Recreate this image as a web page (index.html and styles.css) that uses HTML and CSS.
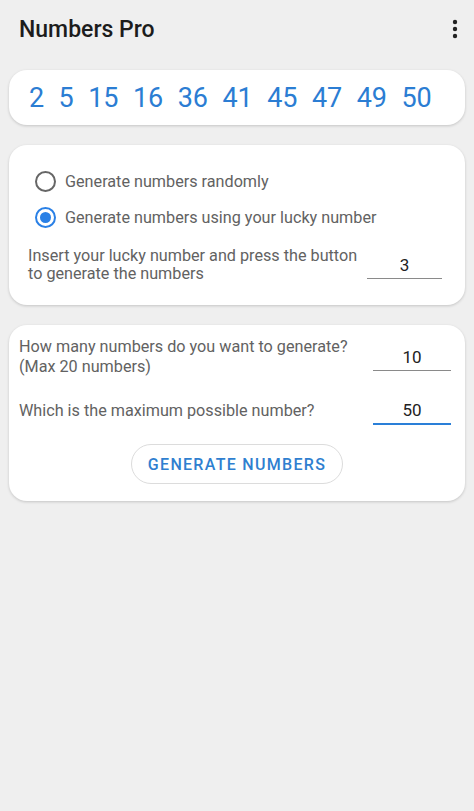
FILE: index.html
```html
<!DOCTYPE html>
<html lang="en">
<head>
  <meta charset="UTF-8" />
  <meta name="viewport" content="width=device-width, initial-scale=1.0" />
  <title>Numbers Pro</title>
  <link rel="stylesheet" href="styles.css">
</head>
<body>

  <header class="appbar">
    <div class="app-title">Numbers Pro</div>
    <div class="menu-btn">
      <svg width="6" height="20" viewBox="0 0 6 20">
        <circle cx="3" cy="3" r="2.2" fill="#222" />
        <circle cx="3" cy="10" r="2.2" fill="#222" />
        <circle cx="3" cy="17" r="2.2" fill="#222" />
      </svg>
    </div>
  </header>

  <main class="page">

    <!-- Result -->
    <section class="card result-card">
      <span>2</span><span>5</span><span>15</span><span>16</span><span>36</span>
      <span>41</span><span>45</span><span>47</span><span>49</span><span>50</span>
    </section>

    <!-- Mode -->
    <section class="card mode-card">
      <div class="radio-group">
        <label class="radio-row">
          <span class="radio"></span>
          Generate numbers randomly
        </label>
        <label class="radio-row">
          <span class="radio checked"></span>
          Generate numbers using your lucky number
        </label>
      </div>
      <div class="field-row lucky-row">
        <p>Insert your lucky number and press the button to generate the numbers</p>
        <input class="num-input lucky-input" type="text" value="3">
      </div>
    </section>

    <!-- Settings -->
    <section class="card settings-card">
      <div class="field-row">
        <p>How many numbers do you want to generate?<br>(Max 20 numbers)</p>
        <input class="num-input" type="text" value="10">
      </div>
      <div class="field-row max-row">
        <p>Which is the maximum possible number?</p>
        <input class="num-input focused" type="text" value="50">
      </div>
      <div class="btn-wrap">
        <button class="generate-btn">Generate numbers</button>
      </div>
    </section>

  </main>

</body>
</html>
```

FILE: styles.css
```css
/* General */
body {
  font-family: Roboto, "Noto Sans", Arial, sans-serif;
  margin: 0;
  padding: 0;
  background-color: #efefef;
  color: #626262;
}

p {
  margin: 0;
}

/* App bar */
.appbar {
  height: 58px;
  padding: 0 19px;
  display: flex;
  justify-content: space-between;
  align-items: center;
}

.app-title {
  font-size: 23px;
  font-weight: 500;
  color: #1c1c1c;
}

.menu-btn {
  display: flex;
  margin-right: -3px;
}

/* Cards */
.page {
  padding: 12px 9px;
  display: flex;
  flex-direction: column;
  gap: 20px;
}

.card {
  background-color: #fff;
  border-radius: 18px;
  box-shadow: 0 1px 3px rgba(0, 0, 0, 0.18);
}

.result-card {
  height: 55px;
  padding: 0 20px;
  display: flex;
  align-items: center;
  gap: 14.4px;
  font-size: 27px;
  color: #2b7dd3;
}

/* Radio options */
.mode-card {
  padding: 18px 23px 22px 19px;
}

.radio-group {
  margin-left: 7px;
}

.radio-row {
  height: 36px;
  display: flex;
  align-items: center;
  gap: 9px;
  font-size: 16.2px;
  color: #626262;
}

.radio {
  width: 17px;
  height: 17px;
  border: 2px solid #666;
  border-radius: 50%;
  box-sizing: content-box;
  display: flex;
  align-items: center;
  justify-content: center;
}

.radio.checked {
  border-color: #2a80e6;
}

.radio.checked::after {
  content: "";
  width: 11px;
  height: 11px;
  border-radius: 50%;
  background-color: #2a80e6;
}

/* Input rows */
.field-row {
  display: flex;
  align-items: center;
  justify-content: space-between;
  font-size: 16.2px;
  line-height: 20px;
}

.lucky-row {
  margin-top: 12px;
  line-height: 18px;
}

.lucky-row p {
  width: 335px;
}

.num-input {
  width: 78px;
  height: 27px;
  padding: 0;
  border: none;
  border-bottom: 1.5px solid #8a8a8a;
  background: transparent;
  text-align: center;
  font-family: inherit;
  font-size: 17px;
  color: #222;
  outline: none;
}

.lucky-input {
  width: 75px;
}

.num-input.focused {
  border-bottom: 2px solid #2a7fd8;
}

.settings-card {
  padding: 12px 14px 17px 10px;
}

.max-row {
  margin-top: 19px;
}

/* Button */
.btn-wrap {
  display: flex;
  justify-content: center;
  margin-top: 19px;
  margin-left: 4px;
}

.generate-btn {
  height: 40px;
  padding: 0;
  width: 212px;
  border: 1px solid #dcdcdc;
  border-radius: 20px;
  background: #fff;
  font-family: inherit;
  font-size: 16px;
  font-weight: 500;
  letter-spacing: 1.3px;
  text-transform: uppercase;
  color: #2f7fd0;
}
```
